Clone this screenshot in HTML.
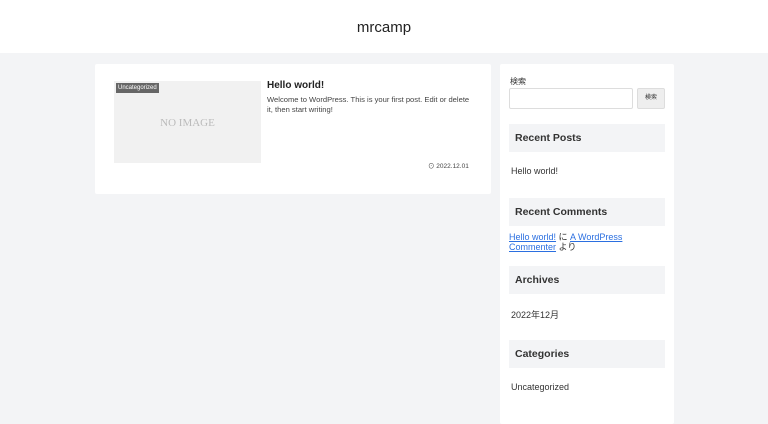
<!DOCTYPE html>
<html><head><meta charset="utf-8"><style>
*{margin:0;padding:0;box-sizing:border-box}
body{width:768px;height:415px;overflow:hidden;background:#f3f4f6;font-family:"Liberation Sans","Noto Sans CJK JP",sans-serif;color:#333;position:relative}
.hdr{position:absolute;left:0;top:0;width:768px;height:53px;background:#fff;text-align:center;line-height:56px;font-size:15px;color:#222}
.main{position:absolute;left:95px;top:64px;width:396px;height:130px;background:#fff;border-radius:2px}
.img{position:absolute;left:19px;top:17px;width:147px;height:82px;background:#f1f1f1;text-align:center;line-height:84px;font-family:"Liberation Serif",serif;font-size:11px;color:#bbb}
.cat{position:absolute;left:21px;top:19px;background:#666;color:#fff;font-size:6px;padding:1px 2px;line-height:8px}
.t{position:absolute;left:172px;top:16px;font-size:10px;font-weight:bold;color:#222}
.ex{position:absolute;left:172px;top:31px;width:208px;font-size:7.6px;line-height:9.5px;color:#444}
.dt{position:absolute;left:333px;top:96px;font-size:6.5px;color:#444}
.side{position:absolute;left:500px;top:64px;width:174px;height:360px;background:#fff;border-radius:2px}
.lbl{position:absolute;left:10px;top:12px;font-size:8px}
.in{position:absolute;left:9px;top:24px;width:124px;height:21px;border:1px solid #ddd;border-radius:2px}
.btn{position:absolute;left:137px;top:24px;width:28px;height:21px;background:#eee;border:1px solid #ddd;border-radius:2px;font-size:6px;text-align:center;line-height:19px}
.h{position:absolute;left:9px;width:156px;height:28px;background:#f3f4f6;font-size:10.5px;font-weight:bold;padding-left:6px;line-height:28px;color:#333}
.it{position:absolute;left:11px;font-size:9px;color:#333}
a{color:#2b6fe0}
</style></head><body>
<div class="hdr">mrcamp</div>
<div class="main">
<div class="img">NO IMAGE</div><div class="cat">Uncategorized</div>
<div class="t">Hello world!</div>
<div class="ex">Welcome to WordPress. This is your first post. Edit or delete it, then start writing!</div>
<div class="dt">⊙ 2022.12.01</div>
</div>
<div class="side">
<div class="lbl">検索</div><div class="in"></div><div class="btn">検索</div>
<div class="h" style="top:60px">Recent Posts</div>
<div class="it" style="top:102px">Hello world!</div>
<div class="h" style="top:134px">Recent Comments</div>
<div class="it" style="top:169px;left:9px;line-height:9.5px;width:140px"><a href="#">Hello world!</a> に <a href="#">A WordPress Commenter</a> より</div>
<div class="h" style="top:202px">Archives</div>
<div class="it" style="top:244px">2022年12月</div>
<div class="h" style="top:276px">Categories</div>
<div class="it" style="top:318px">Uncategorized</div>
</div>
</body></html>
